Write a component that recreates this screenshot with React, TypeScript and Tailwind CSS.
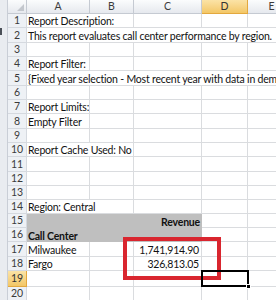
import React from 'react';

type Cell = {
  text?: string;
  span?: 'col-span-2' | 'col-span-5' | '';
  right?: boolean;
};

const font = { fontFamily: 'Lato, "Open Sans", sans-serif' };

// 行ごとの内容（A〜E）
const rows: Cell[][] = [
  [{ text: 'Report Description:', span: 'col-span-2' }, {}, {}, {}],
  [{ text: 'This report evaluates call center performance by region.', span: 'col-span-5' }],
  [{}, {}, {}, {}, {}],
  [{ text: 'Report Filter:' }, {}, {}, {}, {}],
  [{ text: '{Fixed year selection - Most recent year with data in dem', span: 'col-span-5' }],
  [{}, {}, {}, {}, {}],
  [{ text: 'Report Limits:' }, {}, {}, {}, {}],
  [{ text: 'Empty Filter' }, {}, {}, {}, {}],
  [{}, {}, {}, {}, {}],
  [{ text: 'Report Cache Used: No', span: 'col-span-2' }, {}, {}, {}],
  [{}, {}, {}, {}, {}],
  [{}, {}, {}, {}, {}],
  [{}, {}, {}, {}, {}],
  [{ text: 'Region: Central', span: 'col-span-2' }, {}, {}, {}],
];

const tail: Cell[][] = [
  [{ text: 'Milwaukee' }, {}, { text: '1,741,914.90', right: true }, {}, {}],
  [{ text: 'Fargo' }, {}, { text: '326,813.05', right: true }, {}, {}],
  [{}, {}, {}, {}, {}],
  [{}, {}, {}, {}, {}],
];

function GridCell({ cell }: { cell: Cell }) {
  return (
    <div
      className={`${cell.span ?? ''} flex items-end overflow-hidden whitespace-nowrap border-r border-b border-[#dadcdf] pb-[1px] text-[10.5px] tracking-[-0.2px] leading-none text-[#111] ${
        cell.right ? 'justify-end pr-[2px]' : 'pl-[1px]'
      }`}
    >
      {cell.text}
    </div>
  );
}

function RowHead({ n, active }: { n: number; active?: boolean }) {
  return (
    <div
      className={`flex items-center justify-center border-r border-b text-[10.5px] leading-none ${
        active
          ? 'bg-linear-to-b from-[#fbe3a6] to-[#f3c766] border-[#e3a83e] text-[#333]'
          : 'bg-[#eef1f5] border-[#d5d9df] text-[#3b3b3b]'
      }`}
    >
      {n}
    </div>
  );
}

export default function App() {
  const cols = ['A', 'B', 'C', 'D', 'E'];
  return (
    <div className="relative w-[276px] h-[300px] overflow-hidden bg-white" style={font}>
      <div className="grid grid-cols-[8px_19px_63px_44px_68px_46px_48px] grid-rows-[14px_14px_15px_14px_14px_15px_14px_14px_15px_14px_14px_15px_14px_14px_14px_14px_14px_15px_14px_16px_14px]">
        {/* 左端のパネル */}
        <div className="col-start-1 row-start-1 row-span-21 relative border-r border-[#c9ced6] bg-[#e9ecf0]">
          <div className="absolute left-0 top-[28px] h-[7px] w-[2px] bg-[#4a4f57]" />
        </div>

        {/* 列ヘッダー */}
        <div className="relative border-r border-b border-[#c5cad2] bg-linear-to-b from-[#fbfcfd] to-[#e6e9ee]">
          <svg className="absolute right-[2px] bottom-[2px]" width="7" height="7" viewBox="0 0 7 7">
            <polygon points="7,0 7,7 0,7" fill="#c3c7cd" />
          </svg>
        </div>
        {cols.map((c) => (
          <div
            key={c}
            className={`flex items-center justify-center border-r border-b text-[10.5px] leading-none ${
              c === 'D'
                ? 'bg-linear-to-b from-[#fbe3a6] to-[#f3c766] border-[#e3a83e] text-[#333]'
                : 'bg-linear-to-b from-[#fbfcfd] to-[#e6e9ee] border-[#c5cad2] text-[#3b3b3b]'
            }`}
          >
            {c}
          </div>
        ))}

        {rows.map((r, i) => (
          <React.Fragment key={i}>
            <RowHead n={i + 1} />
            {r.map((cell, j) => (
              <GridCell key={j} cell={cell} />
            ))}
          </React.Fragment>
        ))}

        {/* 15〜16行目：グレーの見出し帯 */}
        <RowHead n={15} />
        <div className="col-span-3 row-span-2 flex flex-col bg-[#bfbfbf] text-[10.5px] tracking-[-0.2px] leading-none font-bold text-[#111]">
          <div className="flex flex-1 items-end justify-end pr-[2px] pb-[1px]">Revenue</div>
          <div className="flex flex-1 items-end pl-[1px] pb-[1px]">Call Center</div>
        </div>
        <GridCell cell={{}} />
        <GridCell cell={{}} />
        <RowHead n={16} />
        <GridCell cell={{}} />
        <GridCell cell={{}} />

        {tail.map((r, i) => (
          <React.Fragment key={i}>
            <RowHead n={i + 17} active={i + 17 === 19} />
            {r.map((cell, j) => (
              <GridCell key={j} cell={cell} />
            ))}
          </React.Fragment>
        ))}
      </div>

      {/* 強調用の赤枠 */}
      <div className="absolute left-[123px] top-[237px] w-[98px] h-[43px] border-4 border-[#d9262f]" />

      {/* 選択セル D19 */}
      <div className="absolute left-[201px] top-[270px] w-[48px] h-[17px] border-2 border-black" />
      <div className="absolute left-[246px] top-[284px] w-[5px] h-[5px] bg-black border border-white" />
    </div>
  );
}
